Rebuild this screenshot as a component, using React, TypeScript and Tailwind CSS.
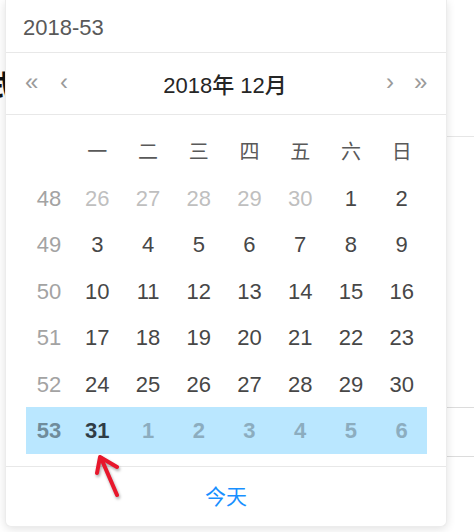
import React from "react";

const FONT = '"Liberation Sans", "Noto Sans CJK SC", Arial, sans-serif';

const weekdays = ["一", "二", "三", "四", "五", "六", "日"];

type Cell = { d: number; other?: boolean };
const rows: { wk: number; days: Cell[] }[] = [
  { wk: 48, days: [{ d: 26, other: true }, { d: 27, other: true }, { d: 28, other: true }, { d: 29, other: true }, { d: 30, other: true }, { d: 1 }, { d: 2 }] },
  { wk: 49, days: [3, 4, 5, 6, 7, 8, 9].map((d) => ({ d })) },
  { wk: 50, days: [10, 11, 12, 13, 14, 15, 16].map((d) => ({ d })) },
  { wk: 51, days: [17, 18, 19, 20, 21, 22, 23].map((d) => ({ d })) },
  { wk: 52, days: [24, 25, 26, 27, 28, 29, 30].map((d) => ({ d })) },
];

const lastRow: Cell[] = [{ d: 31 }, { d: 1, other: true }, { d: 2, other: true }, { d: 3, other: true }, { d: 4, other: true }, { d: 5, other: true }, { d: 6, other: true }];

export default function App() {
  return (
    <div className="relative w-[474px] h-[532px] bg-white overflow-hidden" style={{ fontFamily: FONT }}>
      {/* background page fragments */}
      <div className="absolute left-[-14px] top-[72px] text-[30px] font-bold text-[#111] leading-none">式</div>
      <div className="absolute left-[447px] right-0 top-[136px] h-px bg-[#e6e6e6]" />
      <div className="absolute left-[447px] right-0 top-[407px] h-px bg-[#dcdcdc]" />
      <div className="absolute left-[447px] right-0 top-[456px] h-px bg-[#dcdcdc]" />

      {/* calendar popup */}
      <div className="absolute left-[5px] top-0 w-[442px] h-[527px] bg-white rounded-b-[6px] border-x border-b border-[#ececec] shadow-[0_2px_10px_rgba(0,0,0,0.12)] flex flex-col">
        <div className="h-[53px] border-b border-[#e8e8e8] flex items-center pl-[17px] pt-[3px] text-[22px] text-[#595959]">
          2018-53
        </div>
        <div className="h-[62px] border-b border-[#e8e8e8] flex items-center relative text-[#9a9a9a] text-[24px]">
          <span className="absolute left-[19px] top-[17px] leading-none">«</span>
          <span className="absolute left-[54px] top-[17px] leading-none">‹</span>
          <span className="absolute left-[380px] top-[17px] leading-none">›</span>
          <span className="absolute left-[408px] top-[17px] leading-none">»</span>
          <div className="w-full text-center text-[22px] font-medium text-[#262626] pt-[4px] pr-[2px]">2018年 12月</div>
        </div>
        <div className="pt-[14px] pb-[12px] pl-[20px] pr-[19px]">
          <div className="grid grid-cols-[46px_repeat(7,1fr)] h-[46.4px] items-center text-center text-[20px] text-[#595959]">
            <div />
            {weekdays.map((w) => (
              <div key={w}>{w}</div>
            ))}
          </div>
          {rows.map((r) => (
            <div key={r.wk} className="grid grid-cols-[46px_repeat(7,1fr)] h-[46.4px] items-center text-center text-[22px]">
              <div className="text-[#a3a3a3]">{r.wk}</div>
              {r.days.map((c, i) => (
                <div key={i} className={c.other ? "text-[#bfbfbf]" : "text-[#474747]"}>
                  {c.d}
                </div>
              ))}
            </div>
          ))}
          <div className="grid grid-cols-[46px_repeat(7,1fr)] h-[46.4px] items-center text-center text-[22px] font-bold bg-[#bae7ff]">
            <div className="text-[#6f8c9b]">53</div>
            {lastRow.map((c, i) => (
              <div key={i} className={c.other ? "text-[#8cadbf]" : "text-[#2f3d46]"}>
                {c.d}
              </div>
            ))}
          </div>
        </div>
        <div className="flex-1 border-t border-[#e8e8e8] flex items-center justify-center text-[21px] text-[#1890ff]">
          今天
        </div>
      </div>

      {/* red arrow annotation */}
      <svg className="absolute left-0 top-0" width="474" height="532" viewBox="0 0 474 532">
        <g style={{ filter: "drop-shadow(1px 2px 1.5px rgba(0,0,0,0.35))" }} stroke="#e8172c" strokeWidth="4" strokeLinecap="round" strokeLinejoin="round" fill="none">
          <path d="M117 495 L101 458" />
          <path d="M97 473 L100 457 L117 467" />
        </g>
      </svg>
    </div>
  );
}
